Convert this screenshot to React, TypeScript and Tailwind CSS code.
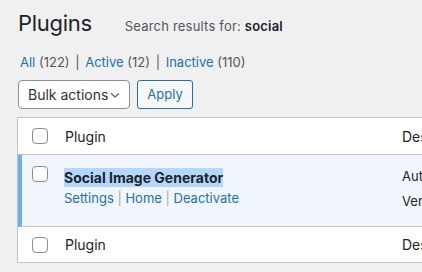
import React from "react";

function Checkbox() {
  return <span className="block h-4 w-4 rounded-[4px] border border-[#8c8f94] bg-white" />;
}

export default function App() {
  return (
    <div
      className="h-[272px] w-[422px] overflow-hidden bg-[#f0f0f1] text-[#1d2327]"
      style={{ fontFamily: "Inter, 'Noto Sans', sans-serif" }}
    >
      <div className="flex items-baseline pl-[18px] pt-[9px]">
        <h1 className="text-[22px] leading-[29px] font-normal tracking-[-0.3px]">Plugins</h1>
        <span className="ml-[33px] text-[13px] tracking-[0.2px] text-[#50575e]">
          Search results for: <b className="font-semibold text-[#1d2327]">social</b>
        </span>
      </div>
      <div className="mt-[14px] pl-[20px] text-[13px] leading-[20px] text-[#50575e]">
        <span className="text-[#2271b1]">All</span> (122) <span className="mx-[2px]">|</span>{" "}
        <span className="text-[#2271b1]">Active</span> (12) <span className="mx-[2px]">|</span>{" "}
        <span className="text-[#2271b1]">Inactive</span> (110)
      </div>
      <div className="mt-[8px] flex gap-[7px] pl-[18px]">
        <div className="flex h-[29px] w-[112px] items-center justify-between rounded-[4px] border border-[#8c8f94] bg-white pl-[9px] pr-[8px] text-[14px] text-[#2c3338]">
          <span>Bulk actions</span>
          <svg width="12" height="12" viewBox="0 0 12 12" fill="none">
            <path d="M2 4.5 L6 8 L10 4.5" stroke="#50575e" strokeWidth="1.2" />
          </svg>
        </div>
        <div className="flex h-[29px] w-[56px] items-center justify-center rounded-[3px] border border-[#2271b1] bg-[#f6f7f7] text-[13px] text-[#2271b1]">
          Apply
        </div>
      </div>
      <div className="ml-[17px] mt-[8px] w-[500px] border border-[#c3c4c7] bg-white">
        <div className="flex h-[37px] items-center border-b border-[#c3c4c7] text-[14px]">
          <div className="w-[47px] shrink-0 pl-[14px]"><Checkbox /></div>
          <div className="w-[337px] shrink-0">Plugin</div>
          <div className="shrink-0 whitespace-nowrap">Description</div>
        </div>
        <div className="flex h-[72px] border-b border-[#c3c4c7] border-l-4 border-l-[#72aee6] bg-[#f0f6fc] text-[14px]">
          <div className="w-[42px] shrink-0 pl-[10px] pt-[11px]"><Checkbox /></div>
          <div className="w-[338px] shrink-0 pt-[14px]">
            <div className="leading-[17px]">
              <span className="bg-[#b3d7ff] pb-[1px] pt-[1px] font-bold">Social Image Generator</span>
            </div>
            <div className="mt-[3px] text-[13px] leading-[18px] text-[#2271b1]">
              Settings <span className="text-[#a7aaad]">|</span> Home{" "}
              <span className="text-[#a7aaad]">|</span> Deactivate
            </div>
          </div>
          <div className="shrink-0 whitespace-nowrap pt-[13px] text-[13px] leading-[17px]">
            <div>Automatically generate</div>
            <div className="mt-[8px]">Version 1.0</div>
          </div>
        </div>
        <div className="flex h-[35px] items-center text-[14px]">
          <div className="w-[47px] shrink-0 pl-[14px]"><Checkbox /></div>
          <div className="w-[337px] shrink-0">Plugin</div>
          <div className="shrink-0 whitespace-nowrap">Description</div>
        </div>
      </div>
    </div>
  );
}
